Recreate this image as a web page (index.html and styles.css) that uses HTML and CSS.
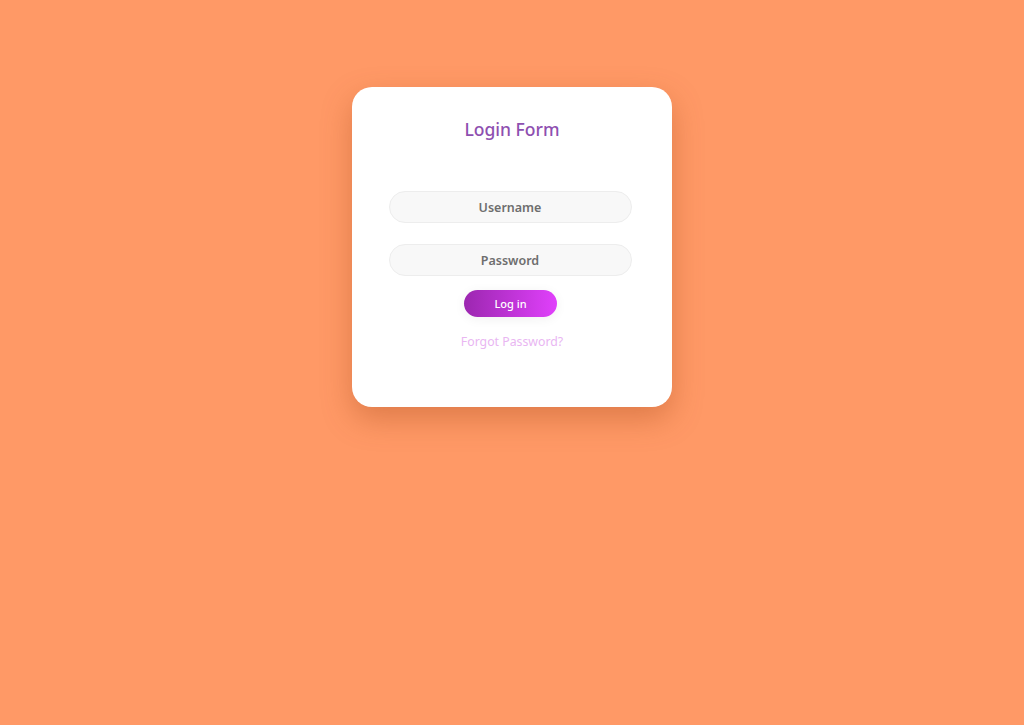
FILE: index.html
```html
<!DOCTYPE html>
<html lang="en">
<head>
<meta charset="utf-8">
<title>Login Form</title>
<link rel="stylesheet" href="styles.css">
</head>
<body>
<main class="page">
  <form class="card">
    <h1 class="title">Login Form</h1>
    <div class="fields">
      <input class="field" type="text" placeholder="Username">
      <input class="field" type="password" placeholder="Password">
    </div>
    <button class="btn" type="button">Log in</button>
    <a class="forgot" href="#">Forgot Password?</a>
  </form>
</main>
</body>
</html>
```

FILE: styles.css
```css
* { box-sizing: border-box; }
html, body { margin: 0; height: 100%; }
body {
  background: #ff9966;
  font-family: "Noto Sans", "DejaVu Sans", sans-serif;
}
.page {
  display: flex;
  justify-content: center;
  padding-top: 87px;
}
.card {
  width: 320px;
  height: 320px;
  background: #fff;
  border-radius: 20px;
  box-shadow: 0 12px 30px rgba(160, 70, 20, 0.35);
  display: flex;
  flex-direction: column;
  align-items: center;
  padding-top: 30px;
}
.title {
  margin: 0;
  font-size: 17.5px;
  font-weight: 500;
  color: #8e4fb0;
  line-height: 25px;
}
.fields {
  margin-top: 49px;
  margin-right: 4px;
  display: flex;
  flex-direction: column;
  gap: 21px;
}
.field {
  width: 243px;
  height: 32px;
  border-radius: 16px;
  border: 1px solid #ededed;
  background: #f8f8f8;
  text-align: center;
  font-family: inherit;
  font-size: 12.5px;
  font-weight: 600;
  outline: none;
}
.field::placeholder { color: #6e6e6e; }
.btn {
  margin-top: 14px;
  margin-right: 3px;
  width: 93px;
  height: 27px;
  border: none;
  border-radius: 14px;
  background: linear-gradient(90deg, #9c27b0, #e040fb);
  color: #fff;
  font-family: inherit;
  font-size: 11px;
  font-weight: 500;
  box-shadow: 0 2px 12px rgba(0, 0, 0, 0.06);
}
.forgot {
  margin-top: 16px;
  color: #e9b6f2;
  text-decoration: none;
  font-size: 12.3px;
}
```
